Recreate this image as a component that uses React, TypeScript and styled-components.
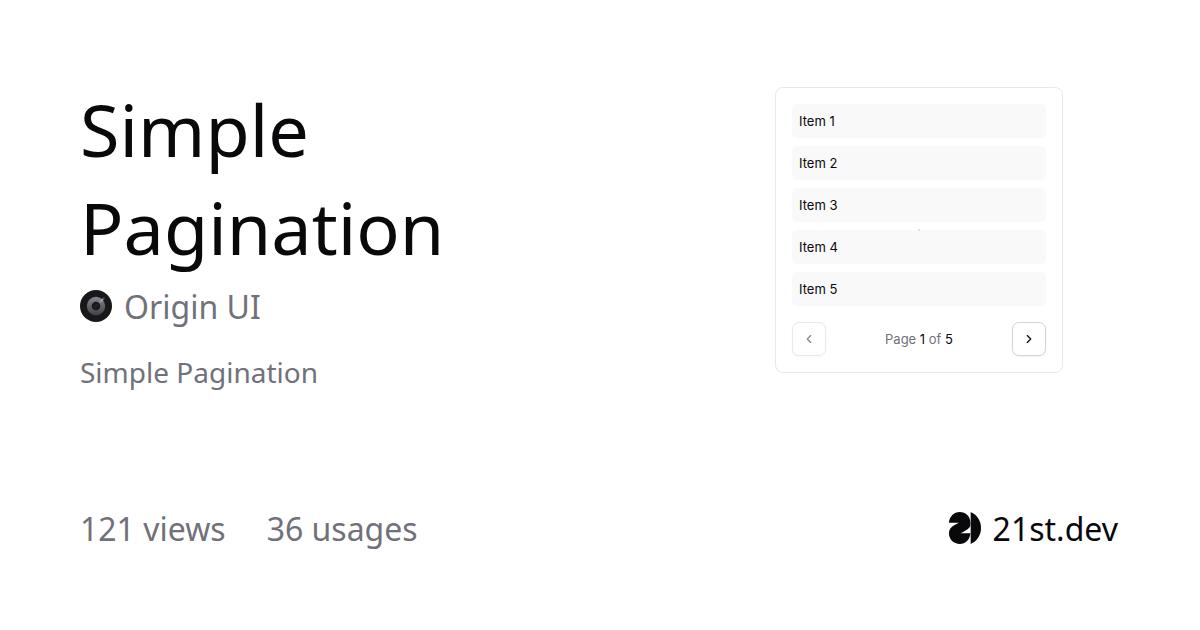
import React, { useState } from "react";
import styled, { createGlobalStyle } from "styled-components";
import { ChevronLeft, ChevronRight } from "lucide-react";

const GlobalStyle = createGlobalStyle`
  *, *::before, *::after { box-sizing: border-box; }
  body {
    margin: 0;
    background: #ffffff;
    color: #09090b;
    font-family: "Noto Sans", sans-serif;
  }
`;

const Page = styled.main`
  min-height: 100vh;
  padding: 80px 80px 78px;
  display: flex;
  flex-direction: column;
  justify-content: space-between;
`;

const Hero = styled.section`
  display: grid;
  grid-template-columns: minmax(0, 1fr) 400px;
  gap: 80px;
`;

const Title = styled.h1`
  margin: 0;
  font-size: 72px;
  line-height: 98px;
  font-weight: 400;
`;

const Mark = styled.svg`
  width: 32px;
  height: 32px;
  margin-top: 6px;
`;

const Author = styled.div`
  display: flex;
  align-items: flex-start;
  gap: 12px;
  margin-top: 8px;
  font-size: 32px;
  line-height: 46px;
  color: #71717a;
`;

const Description = styled.p`
  margin: 22px 0 0;
  font-size: 28px;
  line-height: 40px;
  color: #71717a;
`;

const Preview = styled.div`
  position: relative;
  height: 300px;
  padding-right: 2px;
  display: flex;
  align-items: center;
  justify-content: center;
`;

const Speck = styled.span`
  position: absolute;
  top: 50%;
  left: 50%;
  width: 2px;
  height: 2px;
  margin: -1px 0 0 -2px;
  background: #e2e2e2;
`;

const Card = styled.div`
  width: 288px;
  padding: 16px;
  border: 1px solid #e8e8ea;
  border-radius: 8px;
  font-family: Inter, sans-serif;
  font-size: 13px;
  line-height: 18px;
`;

const Items = styled.ul`
  list-style: none;
  margin: 0;
  padding: 0;
  display: grid;
  gap: 8px;
`;

const Item = styled.li`
  padding: 8px 7px;
  border-radius: 5px;
  background: #f9f9f9;
`;

const Pager = styled.nav`
  display: flex;
  align-items: center;
  justify-content: space-between;
  margin-top: 16px;
`;

const PagerButton = styled.button`
  display: flex;
  align-items: center;
  justify-content: center;
  width: 34px;
  height: 34px;
  padding: 0;
  border: 1px solid #d4d4d8;
  border-radius: 7px;
  background: #ffffff;
  color: #09090b;
  box-shadow: 0 1px 2px rgba(0, 0, 0, 0.05);

  &:disabled {
    opacity: 0.5;
  }
`;

const PageStatus = styled.p`
  margin: 0;
  color: #71717a;
`;

const Current = styled.span`
  color: #09090b;
`;

const Footer = styled.footer`
  display: flex;
  align-items: center;
  justify-content: space-between;
  padding-right: 2px;
  font-size: 32px;
  line-height: 46px;
`;

const Stats = styled.div`
  display: flex;
  gap: 41px;
  color: #71717a;
`;

const Brand = styled.a`
  display: flex;
  align-items: flex-start;
  gap: 12px;
  color: #09090b;
  text-decoration: none;
`;

const Avatar = () => (
  <Mark viewBox="0 0 32 32" aria-hidden="true">
    <defs>
      <linearGradient id="ring" x1="0" y1="0" x2="0" y2="1">
        <stop offset="0" stopColor="#85858d" />
        <stop offset="1" stopColor="#42424a" />
      </linearGradient>
      <linearGradient id="shine" gradientUnits="userSpaceOnUse" x1="19" y1="13" x2="25" y2="7">
        <stop offset="0" stopColor="#d4d4d8" stopOpacity="0" />
        <stop offset="0.5" stopColor="#d4d4d8" stopOpacity="0.6" />
        <stop offset="1" stopColor="#d4d4d8" stopOpacity="0" />
      </linearGradient>
    </defs>
    <circle cx="16" cy="16" r="16" fill="#18181b" />
    <circle cx="16" cy="16" r="9.2" fill="url(#ring)" />
    <circle cx="16" cy="16" r="4.3" fill="#18181b" />
    <path d="M14 18 18 14" stroke="#27272a" strokeWidth="1.6" />
    <path d="M19 13 25 7" stroke="url(#shine)" strokeWidth="2" />
  </Mark>
);

const Logo = () => (
  <Mark viewBox="0 0 32 32" fill="#09090b" aria-hidden="true">
    <path d="M0 10.8C0.2 4.6 5 0 10.8 0C16.8 0 21.4 4.6 21.4 10.6V12.5C21.4 16 18 18.3 11.5 21.2H21.4C21 27.5 16.5 32 10.8 32C4.8 32 0 27.5 0 21.6C0 16 3.5 14 9.8 10.8Z" />
    <path d="M21.7 0C27.8 2.6 32 8.8 32 16S27.8 29.4 21.7 32Z" />
  </Mark>
);

const TOTAL_PAGES = 5;
const PER_PAGE = 5;

export default function App() {
  const [page, setPage] = useState(1);
  const first = (page - 1) * PER_PAGE + 1;
  const items = Array.from({ length: PER_PAGE }, (_, i) => first + i);

  return (
    <>
      <GlobalStyle />
      <Page>
        <Hero>
          <div>
            <Title>Simple Pagination</Title>
            <Author>
              <Avatar />
              Origin UI
            </Author>
            <Description>Simple Pagination</Description>
          </div>
          <Preview>
            <Card>
              <Items>
                {items.map((n) => (
                  <Item key={n}>Item {n}</Item>
                ))}
              </Items>
              <Pager aria-label="Pagination">
                <PagerButton
                  aria-label="Previous page"
                  disabled={page === 1}
                  onClick={() => setPage(page - 1)}
                >
                  <ChevronLeft size={14} />
                </PagerButton>
                <PageStatus>
                  Page <Current>{page}</Current> of <Current>{TOTAL_PAGES}</Current>
                </PageStatus>
                <PagerButton
                  aria-label="Next page"
                  disabled={page === TOTAL_PAGES}
                  onClick={() => setPage(page + 1)}
                >
                  <ChevronRight size={14} />
                </PagerButton>
              </Pager>
            </Card>
            <Speck />
          </Preview>
        </Hero>
        <Footer>
          <Stats>
            <span>121 views</span>
            <span>36 usages</span>
          </Stats>
          <Brand href="#">
            <Logo />
            21st.dev
          </Brand>
        </Footer>
      </Page>
    </>
  );
}
